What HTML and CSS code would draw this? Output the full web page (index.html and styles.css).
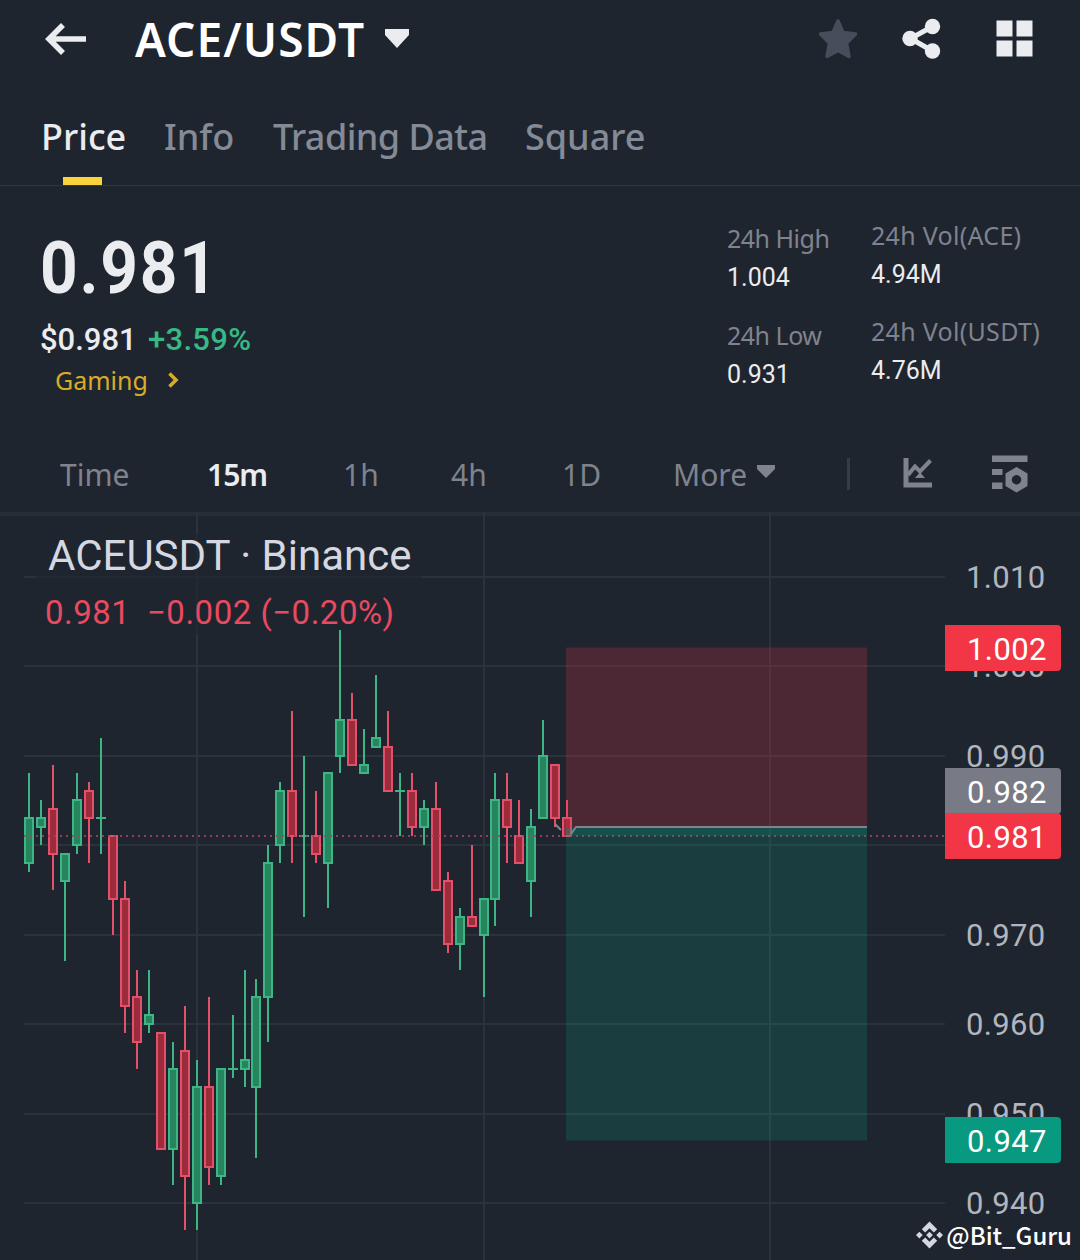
FILE: index.html
```html
<!DOCTYPE html>
<html lang="en">
  <head>
    <meta charset="UTF-8" />
    <meta name="viewport" content="width=device-width, initial-scale=1.0" />
    <title>ACE/USDT</title>
    <link rel="stylesheet" href="styles.css">
  </head>
  <body>
    <header class="header">
      <svg class="back" width="42" height="34" viewBox="0 0 42 34"><path d="M18 3 L4 17 L18 31 M4 17 H41" fill="none" stroke="#eaecef" stroke-width="5.6" /></svg>
      <h1 class="pair">ACE/USDT</h1>
      <svg class="caret" width="24" height="19" viewBox="0 0 24 19"><path d="M0 0H24V6L12 19L0 6Z" fill="#eaecef" /></svg>
      <div class="actions">
        <svg width="40" height="42" viewBox="0 0 40 42"><path d="M20 3 L25 14.5 L37.5 16 L28.5 25 L31 38.5 L20 32.5 L9 38.5 L11.500 25 L2.500 16 L15 14.500 Z" fill="#474d5b" stroke="#474d5b" stroke-width="3.500" stroke-linejoin="round" /></svg>
        <svg width="40" height="42" viewBox="0 0 40 42" fill="#eaecef"><path d="M30.500 8.500 L8.500 20.500 L30.500 33" fill="none" stroke="#eaecef" stroke-width="5" /><circle cx="8" cy="20.500" r="7.700" /><circle cx="30.500" cy="8.500" r="7.700" /><circle cx="30.500" cy="33" r="7.700" /></svg>
        <svg width="37" height="37" viewBox="0 0 37 37" fill="#eaecef"><path d="M.5 .5h16v16h-16zM20.500 .5h16v16h-16zM.5 20.500h16v16h-16zM20.500 20.500h16v16h-16z" /></svg>
      </div>
    </header>

    <nav class="tabs">
      <span class="tab active">Price</span>
      <span class="tab">Info</span>
      <span class="tab long">Trading Data</span>
      <span class="tab">Square</span>
    </nav>

    <section class="summary">
      <div class="quote">
        <div class="price">0.981</div>
        <div class="change"><span class="usd">$0.981</span><span class="up">+3.59%</span></div>
        <div class="tag">
          <span>Gaming</span>
          <svg width="12" height="16" viewBox="0 0 12 16"><path d="M2.500 1.500 L9 8 L2.500 14.500" fill="none" stroke="#d9a927" stroke-width="3.600" /></svg>
        </div>
      </div>
      <dl class="stats">
        <dt>24h High</dt>
        <dd>1.004</dd>
        <dt>24h Low</dt>
        <dd>0.931</dd>
      </dl>
      <dl class="stats volume">
        <dt>24h Vol(ACE)</dt>
        <dd>4.94M</dd>
        <dt>24h Vol(USDT)</dt>
        <dd>4.76M</dd>
      </dl>
    </section>

    <div class="toolbar">
      <span>Time</span>
      <span class="active">15m</span>
      <span>1h</span>
      <span>4h</span>
      <span>1D</span>
      <span>More</span>
      <svg class="more-caret" width="18" height="13" viewBox="0 0 18 13"><path d="M0 0H18V4L9 13L0 4Z" fill="#7f838e" /></svg>
      <i class="divider"></i>
      <svg class="icon" width="30" height="30" viewBox="0 0 30 30"><path d="M3 0V27H29" fill="none" stroke="#7f838e" stroke-width="5" /><path d="M5 17 L12 8.500 L17 13.500 L27.500 2.500" fill="none" stroke="#7f838e" stroke-width="4" /><path d="M17 13L18.500 16L22 20H12L15.500 16Z" fill="#7f838e" /></svg>
      <svg width="37" height="38" viewBox="0 0 37 38" fill="#7f838e"><path d="M1 .5h35.500v6.500h-35.500zM1 14h10.500v6h-10.500zM1 27.500h10.500v6.500h-10.500z" /><path fill-rule="evenodd" d="M25.500 12 L36.500 18.500 V31 L25.500 37.500 L14.500 31 V18.500 Z M25.500 20 a4.700 4.700 0 1 0 .01 0 Z" /></svg>
    </div>

    <div class="chart">
      <svg id="chart" width="1080" height="748" viewBox="0 512 1080 748">
        <rect class="top-line" x="0" y="512" width="1080" height="4" />
        <g id="grid"></g>
        <rect class="legend-bg" x="36" y="534" width="386" height="100" />
        <g id="candles"></g>
        <path class="last-dots" d="M24 836H945" />
        <rect class="stop" x="566" y="647.5" width="301" height="179.500" />
        <rect class="target" x="566" y="827" width="301" height="313.500" />
        <rect class="target-run" x="566" y="828" width="301" height="8" />
        <path class="entry" d="M555 824L561 830M571 834L576 827H867" />
        <g id="axis"></g>
        <g id="tags"></g>
        <text class="symbol" x="48" y="570">ACEUSDT · Binance</text>
        <text class="legend-price" x="45" y="624">0.981</text>
        <text class="legend-price" x="147" y="624">−0.002 (−0.20%)</text>
      </svg>
      <div class="watermark">
        <svg width="27" height="28" viewBox="0 0 28 28" fill="#d5d7de"><path d="M14 0L22 8L18.500 11.500L14 7L9.500 11.500L6 8ZM14 28L22 20L18.500 16.500L14 21L9.500 16.500L6 20ZM14 10.500L17.500 14L14 17.500L10.500 14ZM3.500 10.500L7 14L3.500 17.500L0 14ZM24.500 10.500L28 14L24.500 17.500L21 14Z" /></svg>
        <span>@Bit_Guru</span>
      </div>
    </div>

    <script src="chart.js"></script>
  </body>
</html>
```

FILE: styles.css
```css
* {
  box-sizing: border-box;
}
body {
  margin: 0;
  width: 1080px;
  height: 1260px;
  overflow: hidden;
  background: #1f252f;
  color: #eaecef;
  font-family: "Noto Sans", "Liberation Sans", sans-serif;
}
svg {
  display: block;
  flex: none;
}

.header {
  display: flex;
  align-items: center;
  height: 77px;
  padding: 0 47px 0 45px;
}
.pair {
  width: 229px;
  margin: 0 21px 0 48px;
  font-size: 46px;
  font-weight: 600;
  letter-spacing: 1.1px;
  line-height: 60px;
  white-space: nowrap;
  color: #fff;
}
.actions {
  display: flex;
  align-items: center;
  margin-left: auto;
}
.actions svg + svg {
  margin-left: 44px;
}
.actions svg:last-child {
  margin-left: 54px;
}

.tabs {
  display: grid;
  grid-template-columns: 84px 70px 213px 118px;
  gap: 39px;
  height: 109px;
  padding: 31px 0 0 41px;
  border-bottom: 1px solid #303740;
}
.tab {
  position: relative;
  font-size: 36px;
  font-weight: 500;
  line-height: 58px;
  white-space: nowrap;
  color: #848a96;
}
.tab.long {
  letter-spacing: -.55px;
}
.tab.active {
  color: #eaecef;
}
.tab.active::after {
  content: "";
  position: absolute;
  left: 22px;
  bottom: 0;
  width: 39px;
  height: 8px;
  background: #f8d33a;
}

.summary {
  display: flex;
  height: 250px;
  padding: 32px 0 0 40px;
}
.quote {
  width: 687px;
  font-family: Roboto, "Liberation Sans", sans-serif;
}
.price {
  width: 200px;
  height: 100px;
  font-size: 73px;
  font-weight: 700;
  line-height: 100px;
  letter-spacing: 2px;
  transform: scaleX(.9);
  transform-origin: left;
}
.change {
  display: flex;
  height: 42px;
  font-size: 31px;
  font-weight: 500;
  line-height: 44px;
}
.usd {
  width: 108px;
}
.up {
  color: #36b985;
  letter-spacing: .3px;
}
.tag {
  display: flex;
  align-items: center;
  gap: 19px;
  padding-left: 15px;
  font-family: "Noto Sans", sans-serif;
  font-size: 25px;
  line-height: 40px;
  color: #d9ac28;
}
.stats {
  width: 144px;
  margin: 1px 0 0;
  white-space: nowrap;
  font-size: 25px;
  letter-spacing: -.5px;
}
.stats.volume {
  width: 200px;
  margin-top: -2px;
  letter-spacing: .3px;
}
.stats dt {
  line-height: 38px;
  color: #7f838e;
}
.stats dd {
  margin: 0 0 19px;
  padding-top: 3px;
  font-family: Roboto, "Liberation Sans", sans-serif;
  line-height: 36px;
  letter-spacing: 0;
}
.stats:not(.volume) dd {
  margin-bottom: 20px;
}

.toolbar {
  display: grid;
  grid-template-columns: 147px 136px 108px 111px 111px 84px 90px 56px 88px 40px;
  align-items: center;
  height: 76px;
  padding-left: 60px;
  font-size: 30px;
  color: #7f838e;
}
.toolbar .active {
  font-weight: 600;
  letter-spacing: -1px;
  color: #eaecef;
}
.more-caret {
  margin-bottom: 5px;
}
.icon {
  margin-bottom: 3px;
}
.divider {
  width: 3px;
  height: 32px;
  background: #363c47;
}

.chart {
  position: relative;
  height: 748px;
  font-family: Roboto, "Liberation Sans", sans-serif;
}
.top-line {
  fill: #262d37;
}
.grid-line {
  stroke: #2b323c;
  stroke-width: 2;
}
.legend-bg {
  fill: #1f252f;
  opacity: .7;
}
.candle {
  stroke-width: 2;
}
.candle.rise {
  fill: #26855f;
  stroke: #3db585;
}
.candle.fall {
  fill: #9c2b3b;
  stroke: #e3506a;
}
.last-dots {
  stroke: #a84355;
  stroke-width: 2;
  stroke-dasharray: 2 4;
  opacity: .85;
}
.stop {
  fill: #f23645;
  opacity: .21;
}
.target {
  fill: #089981;
  opacity: .22;
}
.target-run {
  fill: #089981;
  opacity: .2;
}
.entry {
  fill: none;
  stroke: #7f838e;
  stroke-width: 2;
}
.axis-text {
  font-size: 31px;
  letter-spacing: .3px;
  fill: #b2b5be;
}
.tag-text {
  font-size: 31px;
  letter-spacing: .4px;
  fill: #fff;
}
.symbol {
  font-size: 42px;
  fill: #d5d8e0;
}
.legend-price {
  font-size: 33px;
  letter-spacing: .5px;
  fill: #e84a5f;
}
.watermark {
  position: absolute;
  right: 8px;
  bottom: 6px;
  display: flex;
  align-items: center;
  gap: 3px;
  font-family: "Noto Sans CJK SC", sans-serif;
  font-size: 24px;
  font-weight: 500;
  line-height: 38px;
  color: #fff;
}
```

FILE: chart.js
```js
// prices are in thousandths: [open, high, low, close]
const candles = [
  [978, 988, 977, 983], [982, 985, 980, 983], [984, 989, 975, 979], [976, 979, 967, 979],
  [980, 988, 979, 985], [986, 987, 978, 983], [983, 992, 979, 983], [981, 981, 970, 974],
  [974, 976, 959, 962], [963, 966, 955, 958], [960, 966, 959, 961], [959, 959, 946, 946],
  [946, 958, 942, 955], [957, 962, 937, 943], [940, 956, 937, 953], [953, 963, 942, 944],
  [943, 955, 942, 955], [955, 961, 954, 955], [955, 966, 953, 956], [953, 965, 945, 963],
  [963, 980, 958, 978], [980, 987, 978, 986], [986, 995, 978, 981], [981, 990, 972, 981],
  [981, 986, 978, 979], [978, 988, 973, 988], [990, 1004, 988, 994], [994, 997, 989, 989],
  [988, 993, 988, 989], [991, 999, 991, 992], [991, 995, 986, 986], [986, 988, 981, 986],
  [986, 988, 981, 982], [982, 985, 980, 984], [984, 987, 975, 975], [976, 977, 968, 969],
  [969, 973, 966, 972], [972, 980, 971, 971], [970, 974, 963, 974], [974, 988, 971, 985],
  [985, 988, 978, 982], [981, 985, 978, 978], [976, 984, 972, 982], [983, 994, 983, 990],
  [989, 989, 982, 983], [983, 985, 981, 981]
]
const tags = [
  [1002, 625, '#f23645'],
  [982, 768, '#787b86'],
  [981, 813, '#f23645'],
  [947, 1117, '#089981']
]

const y = p => Math.round(576.5 + (1010 - p) * 8.953)
const label = p => (p / 1000).toFixed(3)

let grid = ''
let axis = ''
for (let p = 1010; p >= 940; p -= 10) {
  grid += `<path class="grid-line" d="M24 ${y(p)}H945"/>`
  // 0.980 is covered by the last price tag
  if (p !== 980) axis += `<text class="axis-text" x="966" y="${y(p) + 11}">${label(p)}</text>`
}
for (const x of [197, 484, 770]) {
  grid += `<path class="grid-line" d="M${x} 512V1260"/>`
}
document.getElementById('grid').innerHTML = grid
document.getElementById('axis').innerHTML = axis

document.getElementById('candles').innerHTML = candles.map(([open, high, low, close], i) => {
  const x = 29 + i * 12 - Math.floor((i + 1) / 20)
  const top = y(Math.max(open, close))
  const bottom = y(Math.min(open, close))
  const body = open === close
    ? `<path d="M${x - 5} ${top}H${x + 5}"/>`
    : `<rect x="${x - 4}" y="${top}" width="8" height="${bottom - top}"/>`
  return `<g class="candle ${close >= open ? 'rise' : 'fall'}"><path d="M${x} ${y(high)}V${y(low)}"/>${body}</g>`
}).join('')

document.getElementById('tags').innerHTML = tags.map(([price, top, color]) =>
  `<path d="M945 ${top}h112a4 4 0 0 1 4 4v38a4 4 0 0 1 -4 4h-112z" fill="${color}"/>
   <text class="tag-text" x="967" y="${top + 35}">${label(price)}</text>`
).join('')
```
